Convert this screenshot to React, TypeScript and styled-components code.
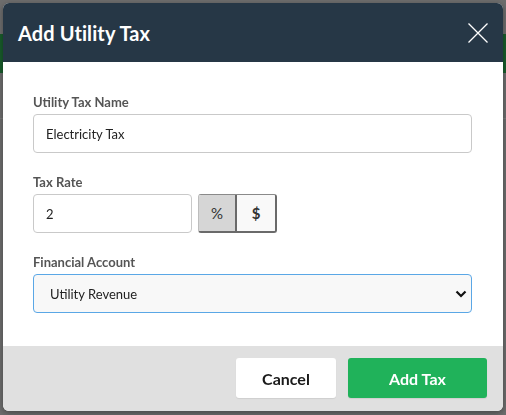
import React, { useState } from "react";
import styled, { createGlobalStyle } from "styled-components";

const GlobalStyle = createGlobalStyle`
  html, body {
    margin: 0;
    padding: 0;
    background: #6d6d6d;
    font-family: Lato, "Open Sans", Arial, sans-serif;
  }
  * {
    box-sizing: border-box;
  }
`;

const Page = styled.div`
  height: 415px;
  overflow: hidden;
`;

const PageTop = styled.div`
  height: 34px;
`;

const PageNav = styled.div`
  height: 39px;
  background: #185c2b;
`;

const PageRule = styled.div`
  margin-top: 45px;
  height: 1px;
  background: #7a7a7a;
`;

const Overlay = styled.div`
  position: fixed;
  inset: 0;
  padding: 3px;
`;

const Modal = styled.div`
  width: 500px;
  height: 408px;
  display: flex;
  flex-direction: column;
  border-radius: 6px;
  overflow: hidden;
  background: #fff;
  box-shadow: 0 2px 6px rgba(0, 0, 0, 0.35);
`;

const Header = styled.div`
  height: 59px;
  flex: none;
  display: flex;
  align-items: center;
  justify-content: space-between;
  padding: 0 15px 0 15px;
  background: #263746;
`;

const Title = styled.h1`
  margin: 0;
  font-size: 20px;
  font-weight: 700;
  color: #fff;
  letter-spacing: 0.1px;
`;

const CloseButton = styled.button`
  width: 20px;
  height: 20px;
  padding: 0;
  border: none;
  background: transparent;
  cursor: pointer;
  display: flex;
  align-items: center;
  justify-content: center;
`;

const Body = styled.div`
  flex: 1;
  padding: 33px 31px 0 30px;
  display: flex;
  flex-direction: column;
  gap: 22px;
`;

const Field = styled.div`
  display: flex;
  flex-direction: column;
`;

const Label = styled.label`
  font-size: 13px;
  line-height: 14px;
  font-weight: 700;
  color: #555;
  margin-bottom: 5px;
`;

const TextInput = styled.input<{ $width?: number }>`
  height: 39px;
  width: ${(p) => (p.$width ? `${p.$width}px` : "100%")};
  padding: 0 12px;
  border: 1px solid #c9c9c9;
  border-radius: 4px;
  background: #fff;
  font-family: inherit;
  font-size: 13px;
  color: #222;
  outline: none;
`;

const Row = styled.div`
  display: flex;
  align-items: center;
  gap: 6px;
`;

const Toggle = styled.div`
  display: flex;
  height: 39px;
  border-radius: 3px;
  overflow: hidden;
  border-top: 1px solid #8a8a8a;
  border-left: 1px solid #bdbdbd;
  border-right: 2px solid #6a6a6a;
  border-bottom: 2px solid #6a6a6a;
`;

const ToggleButton = styled.button<{ $active?: boolean }>`
  width: 38px;
  border: none;
  border-right: ${(p) => (p.$active ? "2px solid #6a6a6a" : "none")};
  background: ${(p) => (p.$active ? "#d6d6d6" : "#f9f9f9")};
  font-family: inherit;
  font-size: 15px;
  font-weight: ${(p) => (p.$active ? 400 : 700)};
  color: #333;
  padding: 0;
  cursor: pointer;
`;

const SelectWrap = styled.div`
  position: relative;
`;

const Select = styled.select`
  appearance: none;
  width: 100%;
  height: 39px;
  padding: 0 30px 0 16px;
  border: 1px solid #5aa7e6;
  border-radius: 4px;
  background: #f8f8f8;
  font-family: inherit;
  font-size: 13px;
  color: #222;
  outline: none;
`;

const Chevron = styled.svg`
  position: absolute;
  right: 5px;
  top: 16px;
  pointer-events: none;
`;

const Footer = styled.div`
  height: 65px;
  flex: none;
  display: flex;
  align-items: center;
  justify-content: flex-end;
  gap: 12px;
  padding: 0 16px 1px;
  background: #e0e0e0;
`;

const Button = styled.button<{ $primary?: boolean }>`
  height: 40px;
  width: ${(p) => (p.$primary ? "139px" : "100px")};
  border: none;
  border-radius: 3px;
  background: ${(p) => (p.$primary ? "#20b25a" : "#fff")};
  color: ${(p) => (p.$primary ? "#fff" : "#1a1a1a")};
  font-family: inherit;
  font-size: 16px;
  font-weight: 700;
  cursor: pointer;
  box-shadow: 0 1px 1px rgba(0, 0, 0, 0.08);
`;

function App() {
  const [name, setName] = useState("Electricity Tax");
  const [rate, setRate] = useState("2");
  const [mode, setMode] = useState<"percent" | "dollar">("percent");
  const [account, setAccount] = useState("utility-revenue");

  return (
    <>
      <GlobalStyle />
      <Page>
        <PageTop />
        <PageNav />
        <PageRule />
      </Page>
      <Overlay>
        <Modal>
          <Header>
            <Title>Add Utility Tax</Title>
            <CloseButton aria-label="Close">
              <svg width="20" height="20" viewBox="0 0 20 20">
                <path
                  d="M0.5 0.5L19.5 19.5M19.5 0.5L0.5 19.5"
                  stroke="#fff"
                  strokeWidth="1.3"
                  fill="none"
                />
              </svg>
            </CloseButton>
          </Header>

          <Body>
            <Field>
              <Label>Utility Tax Name</Label>
              <TextInput value={name} onChange={(e) => setName(e.target.value)} />
            </Field>

            <Field>
              <Label>Tax Rate</Label>
              <Row>
                <TextInput
                  $width={159}
                  value={rate}
                  onChange={(e) => setRate(e.target.value)}
                />
                <Toggle>
                  <ToggleButton
                    $active={mode === "percent"}
                    onClick={() => setMode("percent")}
                  >
                    %
                  </ToggleButton>
                  <ToggleButton
                    $active={mode === "dollar"}
                    onClick={() => setMode("dollar")}
                  >
                    $
                  </ToggleButton>
                </Toggle>
              </Row>
            </Field>

            <Field>
              <Label>Financial Account</Label>
              <SelectWrap>
                <Select
                  value={account}
                  onChange={(e) => setAccount(e.target.value)}
                >
                  <option value="utility-revenue">Utility Revenue</option>
                  <option value="tax-payable">Tax Payable</option>
                </Select>
                <Chevron width="12" height="8" viewBox="0 0 12 8">
                  <path
                    d="M1.5 1.5L6 6L10.5 1.5"
                    stroke="#111"
                    strokeWidth="2.2"
                    fill="none"
                  />
                </Chevron>
              </SelectWrap>
            </Field>
          </Body>

          <Footer>
            <Button>Cancel</Button>
            <Button $primary>Add Tax</Button>
          </Footer>
        </Modal>
      </Overlay>
    </>
  );
}

export default App;
